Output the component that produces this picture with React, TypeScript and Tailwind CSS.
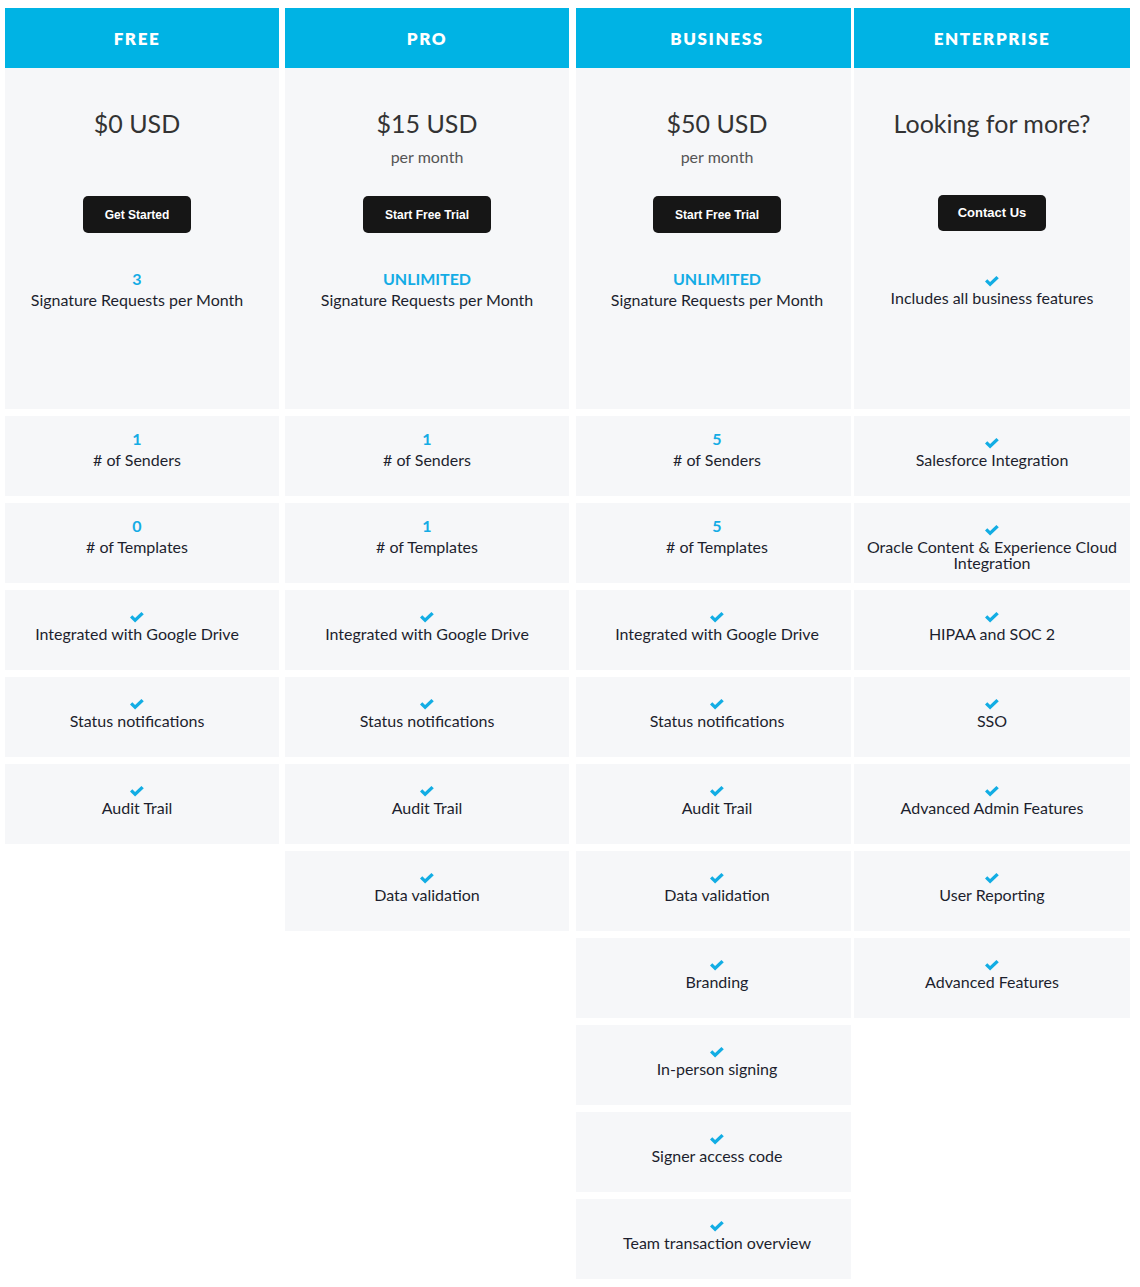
import React from "react";

type Feature = { value?: string; label: string };

type Plan = {
  name: string;
  width: string;
  gap: string;
  pad: string;
  price: string;
  perMonth?: boolean;
  cta: string;
  hero: Feature;
  features: Feature[];
};

const plans: Plan[] = [
  {
    name: "FREE",
    width: "w-[274px]",
    gap: "ml-[5px]",
    pad: "pr-[10px]",
    price: "$0 USD",
    cta: "Get Started",
    hero: { value: "3", label: "Signature Requests per Month" },
    features: [
      { value: "1", label: "# of Senders" },
      { value: "0", label: "# of Templates" },
      { label: "Integrated with Google Drive" },
      { label: "Status notifications" },
      { label: "Audit Trail" },
    ],
  },
  {
    name: "PRO",
    width: "w-[284px]",
    gap: "ml-[6px]",
    pad: "",
    price: "$15 USD",
    perMonth: true,
    cta: "Start Free Trial",
    hero: { value: "UNLIMITED", label: "Signature Requests per Month" },
    features: [
      { value: "1", label: "# of Senders" },
      { value: "1", label: "# of Templates" },
      { label: "Integrated with Google Drive" },
      { label: "Status notifications" },
      { label: "Audit Trail" },
      { label: "Data validation" },
    ],
  },
  {
    name: "BUSINESS",
    width: "w-[275px]",
    gap: "ml-[7px]",
    pad: "pl-[7px]",
    price: "$50 USD",
    perMonth: true,
    cta: "Start Free Trial",
    hero: { value: "UNLIMITED", label: "Signature Requests per Month" },
    features: [
      { value: "5", label: "# of Senders" },
      { value: "5", label: "# of Templates" },
      { label: "Integrated with Google Drive" },
      { label: "Status notifications" },
      { label: "Audit Trail" },
      { label: "Data validation" },
      { label: "Branding" },
      { label: "In-person signing" },
      { label: "Signer access code" },
      { label: "Team transaction overview" },
    ],
  },
];

const enterpriseFeatures = [
  "Salesforce Integration",
  "Oracle Content & Experience Cloud Integration",
  "HIPAA and SOC 2",
  "SSO",
  "Advanced Admin Features",
  "User Reporting",
  "Advanced Features",
];

function Check() {
  return (
    <svg viewBox="0 0 14 11" className="h-[11px] w-[14px]" fill="#12ade4">
      <path d="M0 5.4 L2.3 3.2 L5.1 5.9 L11.4 0 L13.8 2.2 L5.1 10.6 Z" />
    </svg>
  );
}

function Value({ value }: { value?: string }) {
  return (
    <div className="flex h-[20px] items-end justify-center leading-[20px]">
      {value ? (
        <span className="text-[16px] font-bold text-[#14ace5]">{value}</span>
      ) : (
        <Check />
      )}
    </div>
  );
}

function FeatureRow({ item, pad }: { item: Feature; pad: string }) {
  return (
    <div className={`mt-[7px] h-[80px] bg-[#f6f7f9] pt-[13px] text-center ${pad}`}>
      <Value value={item.value} />
      <div className="mt-[3px] px-2 text-[16px] leading-[16px] text-[#1d1f2e]">
        {item.label}
      </div>
    </div>
  );
}

function Header({ name, pad }: { name: string; pad: string }) {
  return (
    <div
      className={`flex h-[60px] items-center justify-center bg-[#00b3e4] pt-[2px] text-[17px] font-extrabold tracking-[1.6px] text-white ${pad}`}
    >
      {name}
    </div>
  );
}

function PlanColumn({ plan }: { plan: Plan }) {
  return (
    <div className={`${plan.width} ${plan.gap} shrink-0`}>
      <Header name={plan.name} pad={plan.pad} />
      <div className={`h-[341px] bg-[#f6f7f9] pt-[35px] text-center ${plan.pad}`}>
        <div className="h-[40px] text-[25px] leading-[40px] text-[#333333]">
          {plan.price}
        </div>
        <div className="mt-[4px] h-[20px] text-[16px] leading-[20px] text-[#555555]">
          {plan.perMonth ? "per month" : ""}
        </div>
        <div className="mt-[29px] flex justify-center">
          <button className="h-[37px] rounded-[5px] bg-[#161616] px-[22px] font-['Liberation_Sans',Arial,sans-serif] text-[12px] font-bold text-white">
            {plan.cta}
          </button>
        </div>
        <div className="mt-[36px]">
          <Value value={plan.hero.value} />
          <div className="mt-[3px] text-[16px] leading-[16px] text-[#1d1f2e]">
            {plan.hero.label}
          </div>
        </div>
      </div>
      {plan.features.map((f, i) => (
        <FeatureRow key={i} item={f} pad={plan.pad} />
      ))}
    </div>
  );
}

function EnterpriseColumn() {
  return (
    <div className="ml-[3px] w-[276px] shrink-0">
      <Header name="ENTERPRISE" pad="" />
      <div className="h-[341px] bg-[#f6f7f9] pt-[35px] text-center">
        <div className="h-[40px] text-[25px] leading-[40px] text-[#333333]">
          Looking for more?
        </div>
        <div className="mt-[52px] flex justify-center">
          <button className="h-[36px] rounded-[5px] bg-[#161616] px-[20px] font-['Liberation_Sans',Arial,sans-serif] text-[13px] font-bold text-white">
            Contact Us
          </button>
        </div>
        <div className="mt-[36px]">
          <Value />
          <div className="mt-[3px] text-[16px] leading-[16px] text-[#1d1f2e]">
            Includes all business features
          </div>
        </div>
      </div>
      {enterpriseFeatures.map((f, i) => (
        <FeatureRow key={i} item={{ label: f }} pad="" />
      ))}
    </div>
  );
}

export default function App() {
  return (
    <div className="min-h-[1287px] bg-white pt-[8px] font-['Lato',sans-serif]">
      <div className="flex items-start">
        {plans.map((p) => (
          <PlanColumn key={p.name} plan={p} />
        ))}
        <EnterpriseColumn />
      </div>
    </div>
  );
}
